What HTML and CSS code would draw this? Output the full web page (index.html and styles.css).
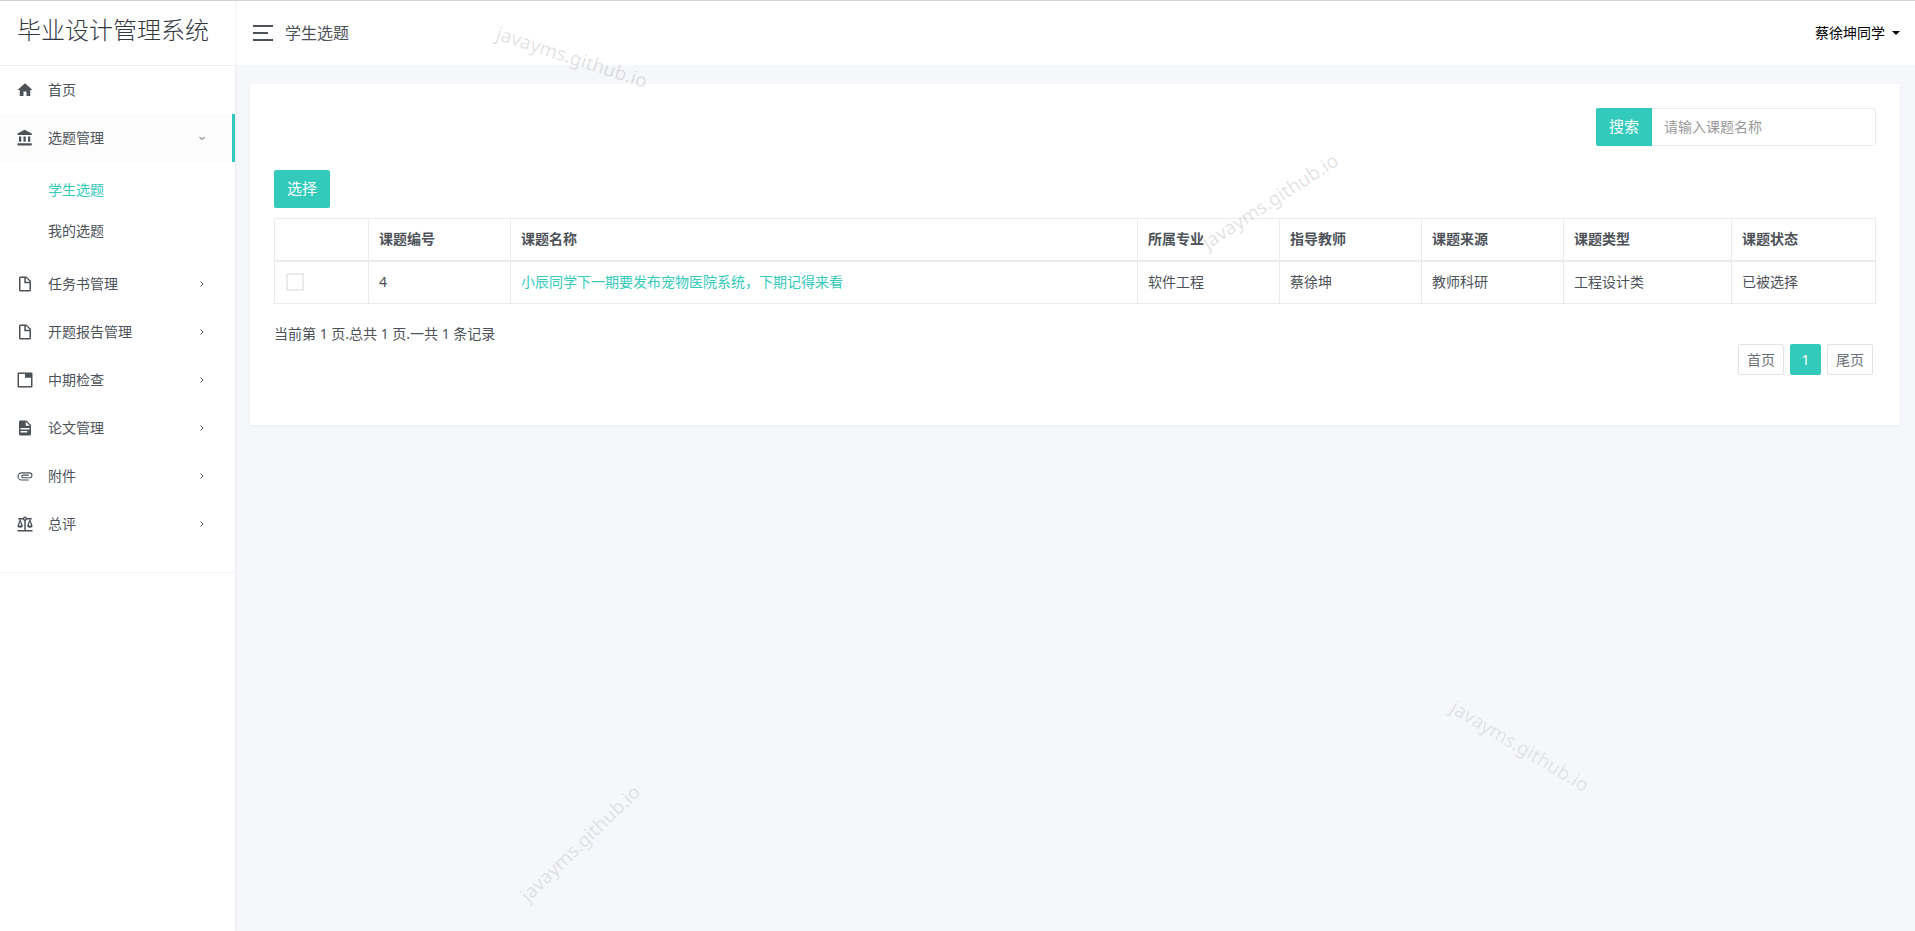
FILE: index.html
```html
<!DOCTYPE html>
<html lang="zh-CN">
<head>
<meta charset="utf-8">
<title>学生选题 - 毕业设计管理系统</title>
<link rel="stylesheet" href="styles.css">
</head>
<body>
<svg class="sprite" aria-hidden="true">
  <symbol id="i-home" viewBox="0 0 24 24"><path d="M10 20v-6h4v6h5v-8h3L12 3 2 12h3v8z"/></symbol>
  <symbol id="i-bank" viewBox="0 0 24 24"><path d="M11.5 1 2 6v2h19V6M16 10v7h3v-7M2 22h19v-3H2M10 10v7h3v-7M4 10v7h3v-7z"/></symbol>
  <symbol id="i-file" viewBox="0 0 24 24"><path d="M13 9h5.500L13 3.500V9M6 2h8l6 6v12a2 2 0 0 1-2 2H6a2 2 0 0 1-2-2V4c0-1.110.890-2 2-2m5 2H6v16h12v-9h-7V4z"/></symbol>
  <symbol id="i-tab" viewBox="0 0 24 24"><path d="M21 2H3a1 1 0 0 0-1 1v18a1 1 0 0 0 1 1h18a1 1 0 0 0 1-1V3a1 1 0 0 0-1-1m-1 18H4V4h8v5h8v11z"/></symbol>
  <symbol id="i-doc" viewBox="0 0 24 24"><path d="M13 9h5.500L13 3.500V9M6 2h8l6 6v12a2 2 0 0 1-2 2H6a2 2 0 0 1-2-2V4c0-1.110.890-2 2-2m9 16v-2H6v2h9m3-4v-2H6v2h12z"/></symbol>
  <symbol id="i-clip" viewBox="0 0 24 24"><path d="M7.500 18A5.500 5.500 0 0 1 2 12.500 5.500 5.500 0 0 1 7.500 7H18a4 4 0 0 1 4 4 4 4 0 0 1-4 4H9.500A2.500 2.500 0 0 1 7 12.500 2.500 2.500 0 0 1 9.500 10H17v1.500H9.500a1 1 0 0 0-1 1 1 1 0 0 0 1 1H18a2.500 2.500 0 0 0 2.500-2.500A2.500 2.500 0 0 0 18 8.500H7.500a4 4 0 0 0-4 4 4 4 0 0 0 4 4H17V18H7.500z"/></symbol>
  <symbol id="i-scale" viewBox="0 0 24 24"><path d="M12 2a3 3 0 0 0-2.820 2H3v2h1.950L2 14c-.470 2 1 3 3.500 3s4.060-1 3.500-3L6.050 6h3.120c.330.850.980 1.500 1.830 1.830V20H2v2h20v-2h-9V7.820c.850-.320 1.500-.970 1.820-1.820h3.130L15 14c-.470 2 1 3 3.500 3s4.060-1 3.500-3l-2.950-8H21V4h-6.170A3 3 0 0 0 12 2m0 2a1 1 0 0 1 1 1 1 1 0 0 1-1 1 1 1 0 0 1-1-1 1 1 0 0 1 1-1M5.500 9l1.500 5H4l1.500-5m13 0 1.500 5h-3l1.500-5z"/></symbol>
  <symbol id="i-right" viewBox="0 0 8 8"><path d="M2.500 1.500 5 4 2.500 6.500" fill="none" stroke="currentColor"/></symbol>
  <symbol id="i-down" viewBox="0 0 8 8"><path d="M1.500 3 4 5.500 6.500 3" fill="none" stroke="currentColor"/></symbol>
</svg>

<div class="layout">
  <aside class="sidebar">
    <div class="brand">毕业设计管理系统</div>
    <nav class="nav">
      <a class="nav-item" href="#"><svg class="icon"><use href="#i-home"/></svg><span class="nav-text">首页</span></a>
      <a class="nav-item nav-open" href="#"><svg class="icon"><use href="#i-bank"/></svg><span class="nav-text">选题管理</span><svg class="arrow"><use href="#i-down"/></svg></a>
      <div class="subnav">
        <a class="subnav-item subnav-active" href="#">学生选题</a>
        <a class="subnav-item" href="#">我的选题</a>
      </div>
      <a class="nav-item" href="#"><svg class="icon"><use href="#i-file"/></svg><span class="nav-text">任务书管理</span><svg class="arrow"><use href="#i-right"/></svg></a>
      <a class="nav-item" href="#"><svg class="icon"><use href="#i-file"/></svg><span class="nav-text">开题报告管理</span><svg class="arrow"><use href="#i-right"/></svg></a>
      <a class="nav-item" href="#"><svg class="icon"><use href="#i-tab"/></svg><span class="nav-text">中期检查</span><svg class="arrow"><use href="#i-right"/></svg></a>
      <a class="nav-item" href="#"><svg class="icon"><use href="#i-doc"/></svg><span class="nav-text">论文管理</span><svg class="arrow"><use href="#i-right"/></svg></a>
      <a class="nav-item" href="#"><svg class="icon"><use href="#i-clip"/></svg><span class="nav-text">附件</span><svg class="arrow"><use href="#i-right"/></svg></a>
      <a class="nav-item" href="#"><svg class="icon"><use href="#i-scale"/></svg><span class="nav-text">总评</span><svg class="arrow"><use href="#i-right"/></svg></a>
    </nav>
  </aside>

  <div class="page">
    <header class="topbar">
      <button class="toggler" type="button" aria-label="折叠菜单"><span class="bar"></span><span class="bar bar-short"></span><span class="bar"></span></button>
      <span class="page-title">学生选题</span>
      <button class="user" type="button">蔡徐坤同学<span class="caret"></span></button>
    </header>

    <main class="content">
      <section class="card">
        <form class="search">
          <button class="btn btn-search" type="button">搜索</button>
          <input class="search-input" type="text" placeholder="请输入课题名称" aria-label="课题名称">
        </form>
        <div class="toolbar"><button class="btn" type="button">选择</button></div>
        <table class="table">
          <colgroup>
            <col class="col-check"><col class="col-std"><col><col class="col-std"><col class="col-std"><col class="col-std"><col class="col-type"><col class="col-state">
          </colgroup>
          <thead>
            <tr><th></th><th>课题编号</th><th>课题名称</th><th>所属专业</th><th>指导教师</th><th>课题来源</th><th>课题类型</th><th>课题状态</th></tr>
          </thead>
          <tbody>
            <tr>
              <td><input class="check" type="checkbox" aria-label="选择课题 4"></td>
              <td>4</td>
              <td><a class="link" href="#">小辰同学下一期要发布宠物医院系统，下期记得来看</a></td>
              <td>软件工程</td><td>蔡徐坤</td><td>教师科研</td><td>工程设计类</td><td>已被选择</td>
            </tr>
          </tbody>
        </table>
        <p class="summary">当前第 1 页.总共 1 页.一共 1 条记录</p>
        <nav class="pager" aria-label="分页">
          <a class="pager-item" href="#">首页</a>
          <a class="pager-item pager-current" href="#">1</a>
          <a class="pager-item" href="#">尾页</a>
        </nav>
      </section>
    </main>
  </div>
</div>

<div class="marks" aria-hidden="true">
  <span class="mark mark-a">javayms.github.io</span>
  <span class="mark mark-b">javayms.github.io</span>
  <span class="mark mark-c">javayms.github.io</span>
  <span class="mark mark-d">javayms.github.io</span>
</div>
</body>
</html>
```
FILE: styles.css
```css
* { box-sizing: border-box; }
body {
  margin: 0;
  background: #f5f7fb;
  color: #4d5259;
  font: 14px/20px "Noto Sans", "Noto Sans CJK SC", sans-serif;
}
a { color: inherit; text-decoration: none; }
button, input { font: inherit; }
.sprite { position: absolute; width: 0; height: 0; }

.layout { display: flex; min-height: 100vh; border-top: 1px solid #d8d8d8; }

.sidebar {
  position: relative;
  z-index: 1;
  flex: none;
  width: 235px;
  background: #fff;
  box-shadow: 0 0 3px rgba(0, 0, 0, .1);
}
.brand {
  height: 65px;
  padding: 13px 17px;
  border-bottom: 1px solid #f0f0f0;
  font-size: 24px;
  line-height: 32px;
  font-weight: 300;
  white-space: nowrap;
  color: #33383f;
}
.nav { padding-bottom: 24px; border-bottom: 1px solid #f2f3f4; }
.nav-item { display: flex; align-items: center; height: 48px; padding: 0 29px 0 16px; }
.nav-open { padding-right: 26px; border-right: 3px solid #33cabb; background: #fcfcfc; }
.icon { width: 18px; height: 18px; margin-right: 14px; fill: #4d5259; }
.nav-text { flex: 1; }
.arrow { width: 8px; height: 8px; }
.subnav { padding: 7px 0 9px; }
.subnav-item { display: block; height: 41px; padding-left: 48px; line-height: 41px; }
.subnav-active { color: #33cabb; }

.page { flex: 1; min-width: 0; }
.topbar {
  display: flex;
  align-items: center;
  height: 64px;
  padding: 0 15px 0 18px;
  background: #fff;
}
.toggler {
  display: flex;
  flex-direction: column;
  gap: 5px;
  width: 20px;
  margin-right: 12px;
  padding: 0;
  border: 0;
  background: none;
}
.bar { width: 20px; height: 2px; background: #4d5259; }
.bar-short { width: 15px; }
.page-title { font-size: 16px; }
.user {
  display: flex;
  align-items: center;
  gap: 7px;
  margin-left: auto;
  padding: 0;
  border: 0;
  background: none;
  color: #000;
}
.caret { border: 4px solid transparent; border-top-color: #000; border-bottom: 0; }

.content { padding: 19px 15px 15px; }
.card {
  padding: 24px 24px 50px;
  background: #fff;
  box-shadow: 0 1px 3px rgba(0, 0, 0, .06);
}
.search { display: flex; justify-content: flex-end; }
.btn {
  height: 38px;
  padding: 0 13px 2px;
  border: 0;
  border-radius: 2px;
  background: #33cabb;
  color: #fff;
  font-size: 15px;
}
.btn-search { border-radius: 2px 0 0 2px; }
.search-input {
  width: 224px;
  height: 38px;
  padding: 0 12px 2px;
  border: 1px solid #ebebeb;
  border-left: 0;
  border-radius: 0 2px 2px 0;
  outline: 0;
}
.search-input::placeholder { color: #999; }
.toolbar { display: flex; margin: 24px 0 10px; }

.table { width: 100%; border-collapse: collapse; table-layout: fixed; }
.table th, .table td {
  height: 42px;
  padding: 0 10px;
  border: 1px solid #ebebeb;
  text-align: left;
}
.table td { height: 43px; }
.table th { border-bottom-width: 2px; font-weight: 700; }
.col-check { width: 94px; }
.col-std { width: 142px; }
.col-type { width: 168px; }
.col-state { width: 144px; }
.check {
  display: block;
  appearance: none;
  width: 18px;
  height: 18px;
  margin: 0 1px;
  border: 2px solid #ebebeb;
}
.link { color: #33cabb; }
.summary { margin: 20px 0 0; }
.pager { display: flex; justify-content: flex-end; gap: 6px; padding-right: 3px; }
.pager-item {
  min-width: 31px;
  padding: 5px 8px;
  border: 1px solid #e3e4e6;
  border-radius: 2px;
  line-height: 19px;
  text-align: center;
  color: #6b7178;
}
.pager-current { border-color: #33cabb; background: #33cabb; color: #fff; }

.marks { position: absolute; inset: 0; overflow: hidden; pointer-events: none; }
.mark {
  position: absolute;
  z-index: 2;
  width: 160px;
  text-align: center;
  font: 19px/24px "Noto Sans", sans-serif;
  color: rgba(0, 0, 0, .13);
}
.mark-a { left: 492px; top: 45px; rotate: 18deg; }
.mark-b { left: 1190px; top: 189px; rotate: -33deg; }
.mark-c { left: 500px; top: 831px; rotate: -44deg; opacity: .8; }
.mark-d { left: 1440px; top: 734px; rotate: 31deg; opacity: .7; }
```
